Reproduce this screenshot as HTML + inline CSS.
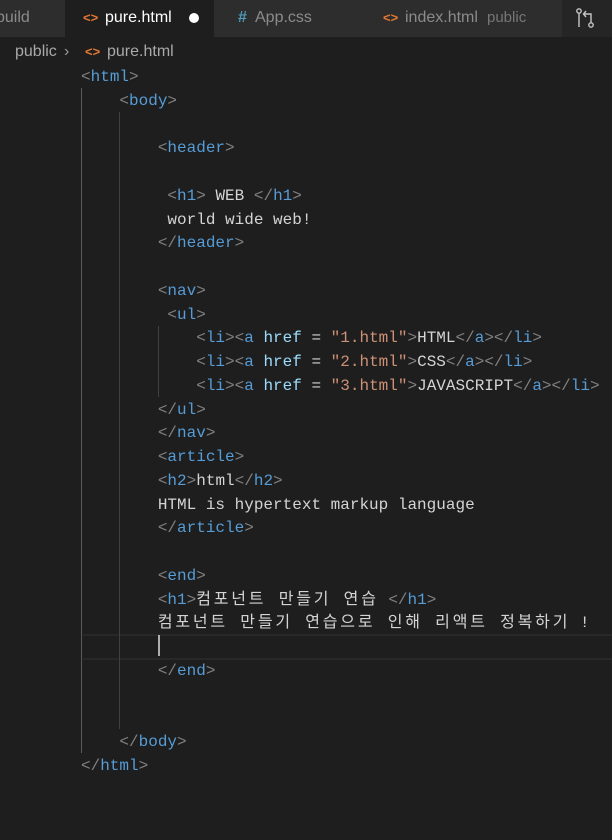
<!DOCTYPE html>
<html><head><meta charset="utf-8"><style>
body{margin:0;width:612px;height:840px;background:#1e1e1e;overflow:hidden;position:relative;font-family:"Liberation Sans","Noto Sans CJK KR",sans-serif}
.tabs{position:absolute;top:0;left:0;width:612px;height:37px;background:#252526}
.tab{position:absolute;top:0;height:37px;line-height:36px;font-size:16px;color:#8b8b8b;background:#2d2d2d;white-space:nowrap;overflow:hidden}
.o{position:absolute;color:#e37933;font-size:13px;font-weight:bold}
.x{position:absolute}
.crumb{position:absolute;top:40px;left:0;width:300px;height:24px;font-size:16px;color:#a9a9a9;line-height:24px}
.code{position:absolute;top:66px;left:0;font-family:"Liberation Mono","Noto Sans CJK KR",monospace;font-size:16px}
.l{position:relative;height:23.76px;line-height:23.76px;white-space:pre;color:#d4d4d4}
.n{position:absolute;right:564px;color:#858585;width:40px;text-align:right}
.c{position:absolute;left:81px}
.b{color:#808080}.t{color:#569cd6}.a{color:#9cdcfe}.s{color:#ce9178}
.k{letter-spacing:2.8px}
.g{position:absolute;width:1px;background:#404040}
</style></head><body>
<div class="tabs">
<div class="tab" style="left:0;width:65px"><span class="x" style="left:-4px">build</span></div>
<div class="tab" style="left:65px;width:149px;background:#1e1e1e;color:#fff"><span class="o" style="left:18px">&lt;&gt;</span><span class="x" style="left:40px">pure.html</span><span class="x" style="left:124px;top:13px;width:10px;height:10px;border-radius:50%;background:#fff"></span></div>
<div class="tab" style="left:214px;width:151px"><span class="x" style="left:24px;color:#519aba;font-weight:bold">#</span><span class="x" style="left:41px">App.css</span></div>
<div class="tab" style="left:365px;width:197px"><span class="o" style="left:18px">&lt;&gt;</span><span class="x" style="left:40px">index.html</span><span class="x" style="left:122px;font-size:15px;color:#777">public</span></div>
<div class="tab" style="left:562px;width:50px;background:#252526"><svg style="position:absolute;left:13px;top:7px" width="20" height="22" viewBox="0 0 20 22" fill="none" stroke="#c5c5c5" stroke-width="1.4"><circle cx="4" cy="4" r="2.2"/><circle cx="16" cy="18" r="2.2"/><path d="M4 6v14M16 16V7H9M11 4L8.5 7 11 10"/></svg></div>
</div>
<div class="crumb"><span class="x" style="left:15px">public</span><span class="x" style="left:64px;color:#999">›</span><span class="o" style="left:85px">&lt;&gt;</span><span class="x" style="left:107px">pure.html</span></div>
<div style="position:absolute;left:83px;top:634px;width:529px;height:22px;border:2px solid #282828;border-left:none;border-right:none"></div>
<div style="position:absolute;left:158px;top:635px;width:2px;height:21px;background:#aeafad"></div>
<div class="g" style="left:81px;top:88px;height:665px;background:#5a5a5a"></div>
<div class="g" style="left:119px;top:112px;height:617px"></div>
<div class="g" style="left:158px;top:326px;height:71px"></div>
<div class="code">
<div class="l"><span class="n">1</span><span class="c"><span class="b">&lt;</span><span class="t">html</span><span class="b">&gt;</span></span></div>
<div class="l"><span class="n">2</span><span class="c">    <span class="b">&lt;</span><span class="t">body</span><span class="b">&gt;</span></span></div>
<div class="l"><span class="n">3</span></div>
<div class="l"><span class="n">4</span><span class="c">        <span class="b">&lt;</span><span class="t">header</span><span class="b">&gt;</span></span></div>
<div class="l"><span class="n">5</span></div>
<div class="l"><span class="n">6</span><span class="c">         <span class="b">&lt;</span><span class="t">h1</span><span class="b">&gt;</span> WEB <span class="b">&lt;/</span><span class="t">h1</span><span class="b">&gt;</span></span></div>
<div class="l"><span class="n">7</span><span class="c">         world wide web!</span></div>
<div class="l"><span class="n">8</span><span class="c">        <span class="b">&lt;/</span><span class="t">header</span><span class="b">&gt;</span></span></div>
<div class="l"><span class="n">9</span></div>
<div class="l"><span class="n">10</span><span class="c">        <span class="b">&lt;</span><span class="t">nav</span><span class="b">&gt;</span></span></div>
<div class="l"><span class="n">11</span><span class="c">         <span class="b">&lt;</span><span class="t">ul</span><span class="b">&gt;</span></span></div>
<div class="l"><span class="n">12</span><span class="c">            <span class="b">&lt;</span><span class="t">li</span><span class="b">&gt;&lt;</span><span class="t">a</span> <span class="a">href</span> = <span class="s">"1.html"</span><span class="b">&gt;</span>HTML<span class="b">&lt;/</span><span class="t">a</span><span class="b">&gt;&lt;/</span><span class="t">li</span><span class="b">&gt;</span></span></div>
<div class="l"><span class="n">13</span><span class="c">            <span class="b">&lt;</span><span class="t">li</span><span class="b">&gt;&lt;</span><span class="t">a</span> <span class="a">href</span> = <span class="s">"2.html"</span><span class="b">&gt;</span>CSS<span class="b">&lt;/</span><span class="t">a</span><span class="b">&gt;&lt;/</span><span class="t">li</span><span class="b">&gt;</span></span></div>
<div class="l"><span class="n">14</span><span class="c">            <span class="b">&lt;</span><span class="t">li</span><span class="b">&gt;&lt;</span><span class="t">a</span> <span class="a">href</span> = <span class="s">"3.html"</span><span class="b">&gt;</span>JAVASCRIPT<span class="b">&lt;/</span><span class="t">a</span><span class="b">&gt;&lt;/</span><span class="t">li</span><span class="b">&gt;</span></span></div>
<div class="l"><span class="n">15</span><span class="c">        <span class="b">&lt;/</span><span class="t">ul</span><span class="b">&gt;</span></span></div>
<div class="l"><span class="n">16</span><span class="c">        <span class="b">&lt;/</span><span class="t">nav</span><span class="b">&gt;</span></span></div>
<div class="l"><span class="n">17</span><span class="c">        <span class="b">&lt;</span><span class="t">article</span><span class="b">&gt;</span></span></div>
<div class="l"><span class="n">18</span><span class="c">        <span class="b">&lt;</span><span class="t">h2</span><span class="b">&gt;</span>html<span class="b">&lt;/</span><span class="t">h2</span><span class="b">&gt;</span></span></div>
<div class="l"><span class="n">19</span><span class="c">        HTML is hypertext markup language</span></div>
<div class="l"><span class="n">20</span><span class="c">        <span class="b">&lt;/</span><span class="t">article</span><span class="b">&gt;</span></span></div>
<div class="l"><span class="n">21</span></div>
<div class="l"><span class="n">22</span><span class="c">        <span class="b">&lt;</span><span class="t">end</span><span class="b">&gt;</span></span></div>
<div class="l"><span class="n">23</span><span class="c">        <span class="b">&lt;</span><span class="t">h1</span><span class="b">&gt;</span><span class="k">컴포넌트 만들기 연습</span> <span class="b">&lt;/</span><span class="t">h1</span><span class="b">&gt;</span></span></div>
<div class="l"><span class="n">24</span><span class="c">        <span class="k">컴포넌트 만들기 연습으로 인해 리액트 정복하기</span> !</span></div>
<div class="l"><span class="n" style="color:#c6c6c6">25</span></div>
<div class="l"><span class="n">26</span><span class="c">        <span class="b">&lt;/</span><span class="t">end</span><span class="b">&gt;</span></span></div>
<div class="l"><span class="n">27</span></div>
<div class="l"><span class="n">28</span></div>
<div class="l"><span class="n">29</span><span class="c">    <span class="b">&lt;/</span><span class="t">body</span><span class="b">&gt;</span></span></div>
<div class="l"><span class="n">30</span><span class="c"><span class="b">&lt;/</span><span class="t">html</span><span class="b">&gt;</span></span></div>
</div>
</body></html>
